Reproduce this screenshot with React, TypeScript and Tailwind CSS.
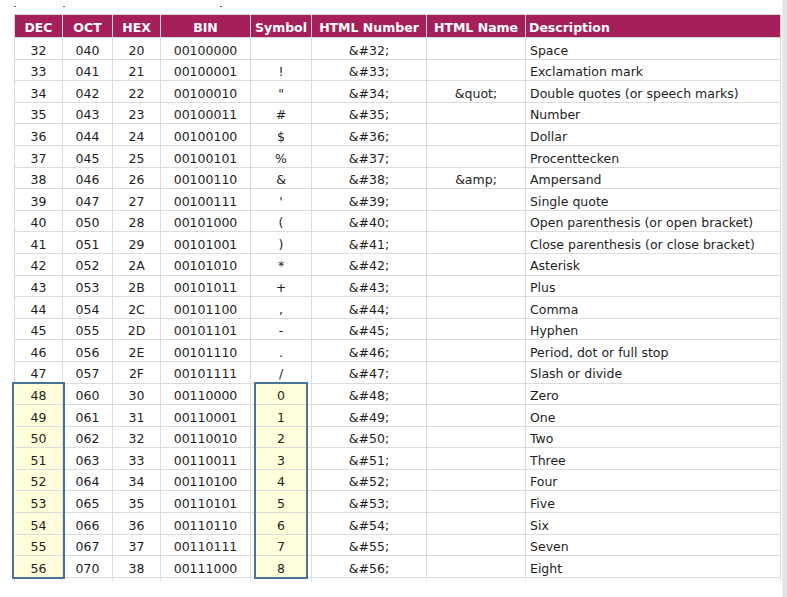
import React from "react";

const rows: [string, string, string, string, string, string, string, string][] = [
  ["32", "040", "20", "00100000", "", "&#32;", "", "Space"],
  ["33", "041", "21", "00100001", "!", "&#33;", "", "Exclamation mark"],
  ["34", "042", "22", "00100010", "\"", "&#34;", "&quot;", "Double quotes (or speech marks)"],
  ["35", "043", "23", "00100011", "#", "&#35;", "", "Number"],
  ["36", "044", "24", "00100100", "$", "&#36;", "", "Dollar"],
  ["37", "045", "25", "00100101", "%", "&#37;", "", "Procenttecken"],
  ["38", "046", "26", "00100110", "&", "&#38;", "&amp;", "Ampersand"],
  ["39", "047", "27", "00100111", "'", "&#39;", "", "Single quote"],
  ["40", "050", "28", "00101000", "(", "&#40;", "", "Open parenthesis (or open bracket)"],
  ["41", "051", "29", "00101001", ")", "&#41;", "", "Close parenthesis (or close bracket)"],
  ["42", "052", "2A", "00101010", "*", "&#42;", "", "Asterisk"],
  ["43", "053", "2B", "00101011", "+", "&#43;", "", "Plus"],
  ["44", "054", "2C", "00101100", ",", "&#44;", "", "Comma"],
  ["45", "055", "2D", "00101101", "-", "&#45;", "", "Hyphen"],
  ["46", "056", "2E", "00101110", ".", "&#46;", "", "Period, dot or full stop"],
  ["47", "057", "2F", "00101111", "/", "&#47;", "", "Slash or divide"],
  ["48", "060", "30", "00110000", "0", "&#48;", "", "Zero"],
  ["49", "061", "31", "00110001", "1", "&#49;", "", "One"],
  ["50", "062", "32", "00110010", "2", "&#50;", "", "Two"],
  ["51", "063", "33", "00110011", "3", "&#51;", "", "Three"],
  ["52", "064", "34", "00110100", "4", "&#52;", "", "Four"],
  ["53", "065", "35", "00110101", "5", "&#53;", "", "Five"],
  ["54", "066", "36", "00110110", "6", "&#54;", "", "Six"],
  ["55", "067", "37", "00110111", "7", "&#55;", "", "Seven"],
  ["56", "070", "38", "00111000", "8", "&#56;", "", "Eight"],
];

const headers = ["DEC", "OCT", "HEX", "BIN", "Symbol", "HTML Number", "HTML Name", "Description"];
const grid = "grid grid-cols-[48px_50px_48px_90px_61px_115px_99px_255px]";

export default function App() {
  return (
    <div
      className="flex w-[787px] h-[597px] bg-white overflow-hidden text-[#1e1e1e]"
      style={{ fontFamily: '"DejaVu Sans", Verdana, sans-serif' }}
    >
      <div className="w-[782px] flex flex-col">
        <div className="h-[14px] flex items-start pt-[6px]">
          <span className="ml-[14px] w-[2px] h-[1px] bg-[#3a6a9a]" />
          <span className="ml-[47px] w-[2px] h-[1px] bg-[#3a6a9a]" />
          <span className="ml-[155px] w-[2px] h-[1px] bg-[#3a6a9a]" />
        </div>
        <div className="ml-[14px] w-[767px] border-l border-t border-[#d6d6d6]">
          <div className={`${grid} h-[23px] bg-[#a51f5b] text-white font-bold text-[12.5px]`}>
            {headers.map((h, i) => (
              <div
                key={h}
                className={`border-r border-b border-[#d6d6d6] flex items-center pt-[4px] leading-none ${
                  i === 7 ? "justify-start pl-[3px]" : "justify-center"
                }`}
              >
                {h}
              </div>
            ))}
          </div>
          <div className="relative text-[12.5px]">
            <div className="absolute left-[-3px] top-[343.6px] w-[53px] h-[197.4px] bg-[#ffffdc]" />
            <div className="absolute left-[239px] top-[343.6px] w-[54px] h-[197.4px] bg-[#ffffdc]" />
            {rows.map((r) => (
              <div key={r[0]} className={`${grid} relative h-[21.6px]`}>
                {r.map((c, i) => (
                  <div
                    key={i}
                    className={`border-r border-b border-[#dcdcdc] flex items-center whitespace-nowrap leading-none pt-[5px] ${
                      i === 7 ? "justify-start pl-[4px]" : "justify-center"
                    }`}
                  >
                    {c}
                  </div>
                ))}
              </div>
            ))}
            <div className={`${grid} relative h-[4px]`}>
              {headers.map((h) => (
                <div key={h} className="border-r border-[#e4e4e4]" />
              ))}
            </div>
            <div className="absolute left-[-3px] top-[343.6px] w-[53px] h-[197.4px] border-2 border-[#4b7396]" />
            <div className="absolute left-[239px] top-[343.6px] w-[54px] h-[197.4px] border-2 border-[#4b7396]" />
          </div>
        </div>
      </div>
      <div className="w-[5px] h-full bg-[#e4e4e4] border-l border-[#ececec]" />
    </div>
  );
}
